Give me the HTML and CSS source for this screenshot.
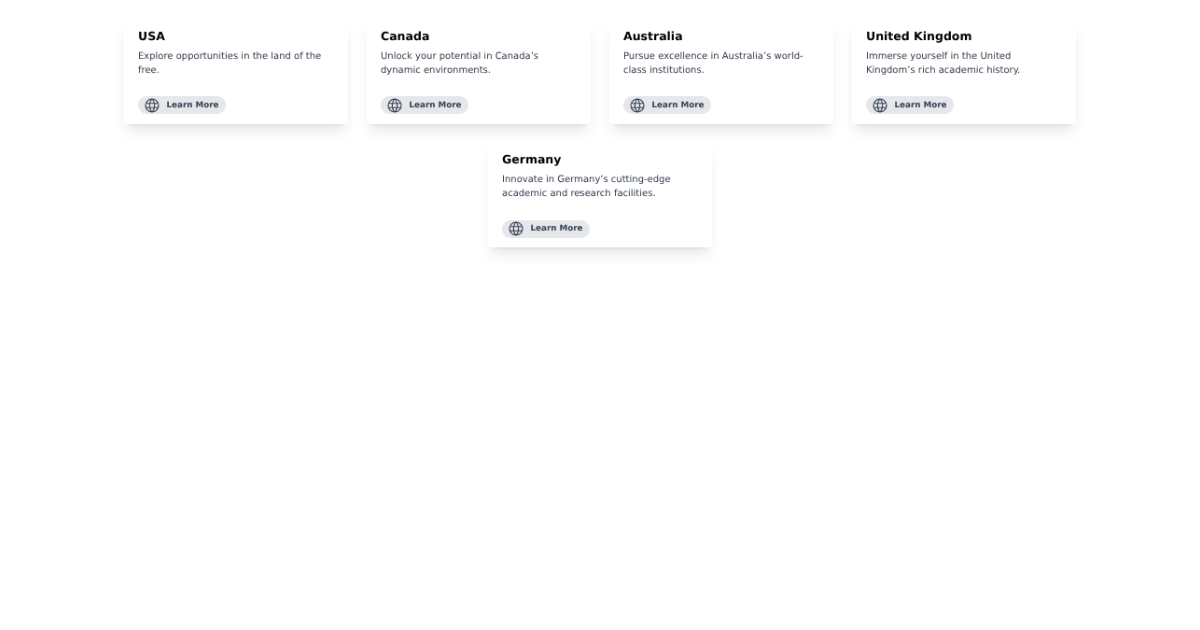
FILE: index.html
```html
<!DOCTYPE html>
<html lang="en">
<head>
<meta charset="UTF-8">
<title>Study Destinations</title>
<link rel="stylesheet" href="styles.css">
</head>
<body>
<div class="cards">
    <div class="card">
        <h3>USA</h3>
        <p>Explore opportunities in the land of the free.</p>
        <a class="more" href="#">
            <svg viewBox="0 0 24 24"><circle cx="12" cy="12" r="10.5"/><path d="M2.5 8.7h19M2.5 15.3h19M11.4 1.5a19 19 0 0 0 0 21M12.6 1.5a19 19 0 0 1 0 21"/></svg>
            Learn More
        </a>
    </div>
    <div class="card">
        <h3>Canada</h3>
        <p>Unlock your potential in Canada’s dynamic environments.</p>
        <a class="more" href="#">
            <svg viewBox="0 0 24 24"><circle cx="12" cy="12" r="10.5"/><path d="M2.5 8.7h19M2.5 15.3h19M11.4 1.5a19 19 0 0 0 0 21M12.6 1.5a19 19 0 0 1 0 21"/></svg>
            Learn More
        </a>
    </div>
    <div class="card">
        <h3>Australia</h3>
        <p>Pursue excellence in Australia’s world-class institutions.</p>
        <a class="more" href="#">
            <svg viewBox="0 0 24 24"><circle cx="12" cy="12" r="10.5"/><path d="M2.5 8.7h19M2.5 15.3h19M11.4 1.5a19 19 0 0 0 0 21M12.6 1.5a19 19 0 0 1 0 21"/></svg>
            Learn More
        </a>
    </div>
    <div class="card">
        <h3>United Kingdom</h3>
        <p>Immerse yourself in the United Kingdom’s rich academic history.</p>
        <a class="more" href="#">
            <svg viewBox="0 0 24 24"><circle cx="12" cy="12" r="10.5"/><path d="M2.5 8.7h19M2.5 15.3h19M11.4 1.5a19 19 0 0 0 0 21M12.6 1.5a19 19 0 0 1 0 21"/></svg>
            Learn More
        </a>
    </div>
    <div class="card">
        <h3>Germany</h3>
        <p>Innovate in Germany’s cutting-edge academic and research facilities.</p>
        <a class="more" href="#">
            <svg viewBox="0 0 24 24"><circle cx="12" cy="12" r="10.5"/><path d="M2.5 8.7h19M2.5 15.3h19M11.4 1.5a19 19 0 0 0 0 21M12.6 1.5a19 19 0 0 1 0 21"/></svg>
            Learn More
        </a>
    </div>
</div>
</body>
</html>
```
FILE: styles.css
```css
body,h3,p{margin:0;padding:0;}
body{background:#fff;font-family:"DejaVu Sans",sans-serif;overflow:hidden;text-rendering:geometricPrecision;}
a{text-decoration:none;}
.cards{display:flex;flex-wrap:wrap;justify-content:center;gap:19.6px 20px;width:1020px;margin:0 auto;padding-top:20px;transform:scale(.9333);transform-origin:top center;will-change:transform;}
.card{width:240px;box-sizing:border-box;padding:10px 15px 8px;background:#fff;border-radius:3px;box-shadow:0 10px 15px -3px rgba(0,0,0,.1),0 4px 6px -4px rgba(0,0,0,.1);}
.card h3{font-size:12.5px;line-height:18px;font-weight:700;color:#000;}
.card p{font-size:10px;line-height:15px;color:#374151;margin:5px 0 0;min-height:30px;}
.more{display:inline-flex;align-items:center;gap:7.5px;height:19px;margin-top:20.4px;padding:0 8px 0 7px;border-radius:10px;background:#e5e7eb;color:#374151;font-size:8.75px;font-weight:700;}
.more svg{width:16px;height:16px;fill:none;stroke:#374151;stroke-width:1.7;}
```
